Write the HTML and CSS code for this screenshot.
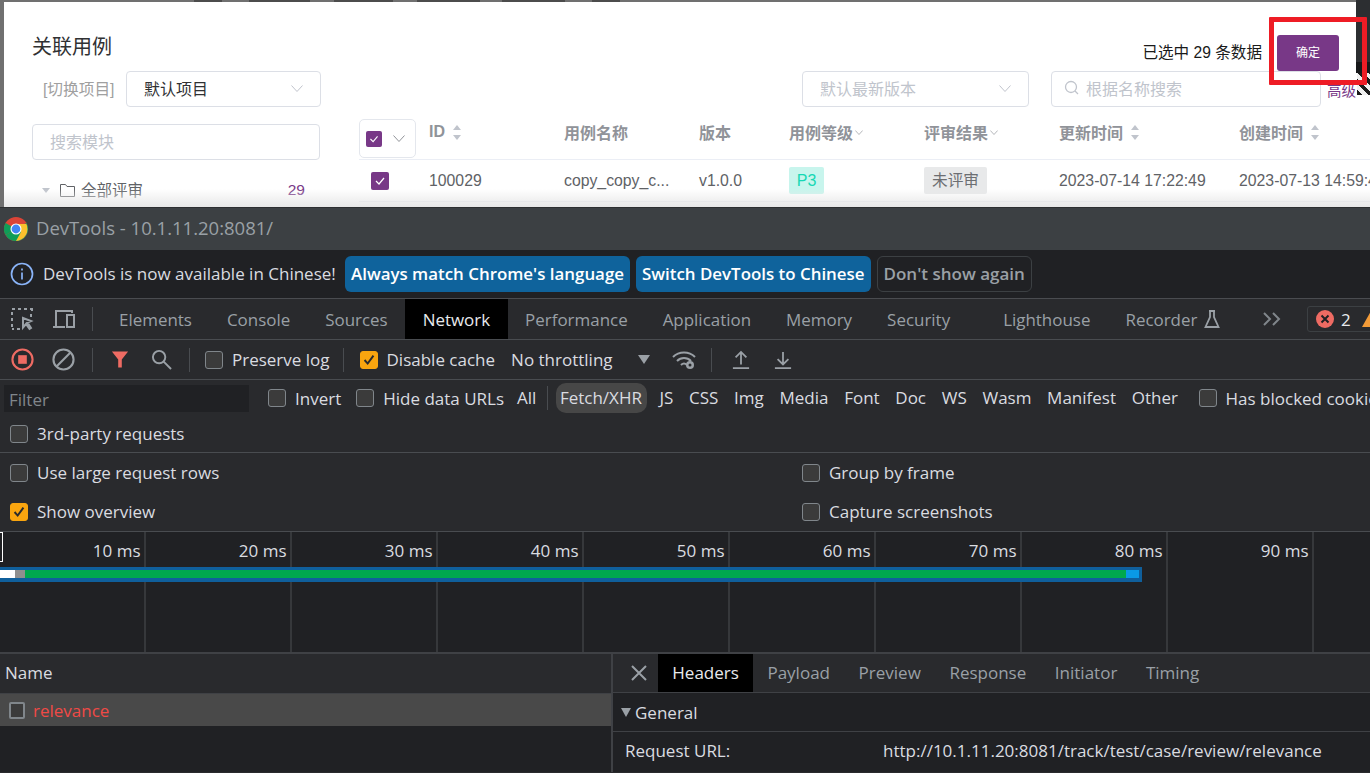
FILE: index.html
```html
<!DOCTYPE html>
<html lang="zh">
<head>
<meta charset="utf-8">
<title>DevTools</title>
<link rel="stylesheet" href="styles.css">
</head>
<body>
<div class="screen">
  <div class="peek"><i class="p1"></i><i class="p2"></i><i class="p3"></i><i class="p4"></i><i class="p5"></i><i class="p6"></i></div>
  <section class="modal">
    <div class="m-head">
      <h2 class="m-title">关联用例</h2>
      <span class="m-count">已选中 29 条数据</span>
      <button class="m-ok"><span>确定</span></button>
    </div>
    <div class="m-filters">
      <span class="m-switch">[切换项目]</span>
      <div class="m-field m-project"><span>默认项目</span><svg class="chev" viewBox="0 0 12 7"><path d="M.5.5 6 6.500 11.500.5"/></svg></div>
      <div class="m-field m-version"><span>默认最新版本</span><svg class="chev" viewBox="0 0 12 7"><path d="M.5.5 6 6.500 11.500.5"/></svg></div>
      <div class="m-field m-search"><svg class="lens" viewBox="0 0 16 16"><circle cx="7" cy="7" r="5.500"/><path d="m11 11 3 3"/></svg><span>根据名称搜索</span></div>
      <a class="m-adv">高级</a>
    </div>
    <div class="m-body">
      <aside class="m-side">
        <div class="m-field m-module"><span>搜索模块</span></div>
        <div class="tree">
          <i class="tree-arrow"></i>
          <svg class="folder" viewBox="0 0 15 13"><path d="M.5 12.500V.5h5l1.500 2h7.500v10z"/></svg>
          <span class="tree-name">全部评审</span>
          <span class="tree-num">29</span>
        </div>
      </aside>
      <div class="m-table">
        <div class="t-head">
          <div class="t-selbox"><i class="t-check"><svg viewBox="0 0 18 18"><path d="m5 9 3 3 5-6"/></svg></i><svg class="chev small" viewBox="0 0 12 7"><path d="M.5.5 6 6.500 11.500.5"/></svg></div>
          <div class="col c-id">ID<i class="sort"></i></div>
          <div class="col c-name">用例名称</div>
          <div class="col c-ver">版本</div>
          <div class="col c-lvl">用例等级<svg class="chev tiny" viewBox="0 0 12 7"><path d="M.5.5 6 6.500 11.500.5"/></svg></div>
          <div class="col c-res">评审结果<svg class="chev tiny" viewBox="0 0 12 7"><path d="M.5.5 6 6.500 11.500.5"/></svg></div>
          <div class="col c-upd">更新时间<i class="sort"></i></div>
          <div class="col c-crt">创建时间<i class="sort"></i></div>
        </div>
        <div class="t-row">
          <div class="c-sel"><i class="t-check"><svg viewBox="0 0 18 18"><path d="m5 9 3 3 5-6"/></svg></i></div>
          <div class="cell c-id">100029</div>
          <div class="cell c-name">copy_copy_c...</div>
          <div class="cell c-ver">v1.0.0</div>
          <div class="cell c-lvl"><span class="tag-p3">P3</span></div>
          <div class="cell c-res"><span class="tag-none">未评审</span></div>
          <div class="cell c-upd">2023-07-14 17:22:49</div>
          <div class="cell c-crt">2023-07-13 14:59:49</div>
        </div>
      </div>
    </div>
    <div class="m-fade"></div>
  </section>
  <div class="snip-strip"></div>
  <div class="snip-hatch"></div>
  <div class="snip-red"></div>

  <section class="devtools">
    <div class="d-title">
      <svg class="chrome" viewBox="0 0 24 24">
        <circle cx="12" cy="12" r="12" fill="#db4437"/>
        <path d="M12 12 1.600 18A12 12 0 0 1 1.600 6z" fill="#0f9d58"/>
        <path d="M1.600 18 12 12l10.400-6A12 12 0 0 1 12 24 12 12 0 0 1 1.600 18z" fill="#0f9d58"/>
        <path d="M12 7h10.400A12 12 0 0 1 12 24l5-9z" fill="#fbc02d"/>
        <circle cx="12" cy="12" r="5.500" fill="#fff"/>
        <circle cx="12" cy="12" r="4.400" fill="#4285f4"/>
      </svg>
      <span>DevTools - 10.1.11.20:8081/</span>
    </div>
    <div class="d-info">
      <svg class="i-info" viewBox="0 0 24 24"><circle cx="12" cy="12" r="10.500"/><path d="M12 10.500v7M12 6.500v2"/></svg>
      <span class="d-info-text">DevTools is now available in Chinese!</span>
      <button class="btn-blue">Always match Chrome's language</button>
      <button class="btn-blue">Switch DevTools to Chinese</button>
      <button class="btn-ghost">Don't show again</button>
    </div>
    <nav class="d-tabs">
      <svg class="ico ico-inspect" viewBox="0 0 24 24"><path d="M2 2h3M8 2h3M14 2h3M20 2h2v2M2 5v3M2 11v3M2 17v3M2 22h2M7 22h3M21 7v3M13 11l8 3-3.500 1.500L21 21l-1.500 1-3.500-5-3 3.500z"/></svg>
      <svg class="ico ico-device" viewBox="0 0 24 24"><path d="M4 17V4h16v2M1 20h12M4 17v3M15 8h7v12h-7z"/></svg>
      <i class="sep sep-tab"></i>
      <a class="tab">Elements</a>
      <a class="tab">Console</a>
      <a class="tab">Sources</a>
      <a class="tab is-on">Network</a>
      <a class="tab">Performance</a>
      <a class="tab">Application</a>
      <a class="tab">Memory</a>
      <a class="tab tab-sec">Security</a>
      <a class="tab">Lighthouse</a>
      <a class="tab tab-rec">Recorder<svg class="flask" viewBox="0 0 16 20"><path d="M5 2h6M6 2v6L1.500 18h13L10 8V2"/></svg></a>
      <svg class="more" viewBox="0 0 18 14"><path d="m1 1 6 6-6 6M10 1l6 6-6 6"/></svg>
      <div class="issues">
        <svg class="err" viewBox="0 0 18 18"><circle cx="9" cy="9" r="9"/><path d="m5.500 5.500 7 7m0-7-7 7"/></svg>
        <span>2</span>
        <svg class="warn" viewBox="0 0 18 16"><path d="M9 0 18 16H0z"/><path class="warn-mark" d="M9 5v6M9 12.500v2"/></svg>
      </div>
    </nav>
    <div class="d-tools">
      <svg class="ico-rec" viewBox="0 0 24 24"><circle cx="12" cy="12" r="10.500"/><rect x="7.500" y="7.500" width="9" height="9"/></svg>
      <svg class="ico-clear" viewBox="0 0 24 24"><circle cx="12" cy="12" r="10.500"/><path d="M5 19 19 5"/></svg>
      <i class="sep ts-1"></i>
      <svg class="ico-filter" viewBox="0 0 20 20"><path d="M1 1h18l-7 9v9H8v-9z"/></svg>
      <svg class="ico-search" viewBox="0 0 22 22"><circle cx="8.500" cy="8.500" r="6.500"/><path d="m13 13 8 8"/></svg>
      <i class="sep ts-2"></i>
      <label class="chk ck-preserve"><i class="box"></i>Preserve log</label>
      <i class="sep ts-3"></i>
      <label class="chk ck-cache"><i class="box on"><svg viewBox="0 0 18 18"><path d="m4 9 3.500 4L14 4"/></svg></i>Disable cache</label>
      <span class="throttle">No throttling</span>
      <i class="caret"></i>
      <svg class="ico-wifi" viewBox="0 0 24 20"><path d="M1 7c6-6 16-6 22 0M5 11c4-4 10-4 14 0M9 15c2-2 4-2 6 0"/><circle cx="18" cy="15" r="4"/><circle class="hole" cx="18" cy="15" r="1.500"/></svg>
      <i class="sep ts-4"></i>
      <svg class="ico-io io-up" viewBox="0 0 20 22"><path d="M10 16V3M4 8l6-6 6 6M1 20h18"/></svg>
      <svg class="ico-io io-down" viewBox="0 0 20 22"><path d="M10 2v13M4 10l6 6 6-6M1 20h18"/></svg>
    </div>
    <div class="d-filter">
      <div class="filter-input">Filter</div>
      <label class="chk"><i class="box"></i>Invert</label>
      <label class="chk"><i class="box"></i>Hide data URLs</label>
      <span class="type type-all">All</span>
      <i class="sep"></i>
      <span class="type is-on">Fetch/XHR</span>
      <span class="type">JS</span>
      <span class="type">CSS</span>
      <span class="type">Img</span>
      <span class="type">Media</span>
      <span class="type">Font</span>
      <span class="type">Doc</span>
      <span class="type">WS</span>
      <span class="type">Wasm</span>
      <span class="type">Manifest</span>
      <span class="type">Other</span>
      <label class="chk chk-blocked"><i class="box"></i>Has blocked cookies</label>
    </div>
    <div class="d-third"><label class="chk"><i class="box"></i>3rd-party requests</label></div>
    <div class="d-settings">
      <label class="chk"><i class="box"></i>Use large request rows</label>
      <label class="chk"><i class="box"></i>Group by frame</label>
      <label class="chk"><i class="box on"><svg viewBox="0 0 18 18"><path d="m4 9 3.500 4L14 4"/></svg></i>Show overview</label>
      <label class="chk"><i class="box"></i>Capture screenshots</label>
    </div>
    <div class="d-over">
      <div class="ov-cell">10 ms</div>
      <div class="ov-cell">20 ms</div>
      <div class="ov-cell">30 ms</div>
      <div class="ov-cell">40 ms</div>
      <div class="ov-cell">50 ms</div>
      <div class="ov-cell">60 ms</div>
      <div class="ov-cell">70 ms</div>
      <div class="ov-cell">80 ms</div>
      <div class="ov-cell">90 ms</div>
      <i class="ov-mark"></i>
      <div class="ov-bar"><i class="b-white"></i><i class="b-gray"></i><i class="b-green"></i><i class="b-blue"></i></div>
    </div>
    <div class="d-split">
      <div class="d-list">
        <div class="l-head">Name</div>
        <div class="l-row"><i class="l-file"></i><span>relevance</span></div>
      </div>
      <div class="d-detail">
        <div class="r-tabs">
          <svg class="close" viewBox="0 0 16 16"><path d="m1 1 14 14M15 1 1 15"/></svg>
          <a class="tab is-on">Headers</a>
          <a class="tab">Payload</a>
          <a class="tab">Preview</a>
          <a class="tab">Response</a>
          <a class="tab">Initiator</a>
          <a class="tab">Timing</a>
        </div>
        <div class="r-general"><i class="r-caret"></i>General</div>
        <div class="r-url"><span class="r-key">Request URL:</span><span>http://10.1.11.20:8081/track/test/case/review/relevance</span></div>
      </div>
    </div>
  </section>
</div>
</body>
</html>
```
FILE: styles.css
```css
* { box-sizing: border-box; }
html, body { margin: 0; padding: 0; }
body { width: 1370px; height: 773px; overflow: hidden; background: #202124; }
i { display: block; font-style: normal; }
button { font: inherit; border: 0; padding: 0; }
.screen { position: relative; width: 1370px; height: 773px; overflow: hidden; background: #707070; }

/* slivers of the page behind the dialog */
.peek { display: flex; height: 2px; }
.peek i { height: 2px; background: #4c4c4c; }
.p1 { width: 28px; margin-left: 194px; }
.p2 { width: 61px; margin-left: 27px; }
.p3 { width: 59px; margin-left: 24px; }
.p4 { width: 63px; margin-left: 24px; }
.p5 { width: 63px; margin-left: 22px; }
.p6 { width: 28px; margin-left: 27px; }

/* modal */
.modal { position: relative; height: 205px; margin-left: 4px; background: #fff; overflow: hidden; font-family: "Liberation Sans", "Noto Sans CJK SC", sans-serif; color: #606266; font-size: 15.800px; }
.m-head { display: flex; align-items: center; height: 69px; padding: 33px 0 0 28px; }
.m-title { margin: 0 auto 0 0; font-weight: 400; font-size: 20px; color: #303133; position: relative; top: -8px; }
.m-count { font-size: 15.600px; color: #1a1a1a; margin-right: 15px; padding-bottom: 4px; }
.m-ok { flex: none; width: 62px; height: 36px; padding-bottom: 3px; background: #783887; color: #fff; font-size: 12px; border-radius: 3px; margin-right: 31px; }
.m-filters { display: flex; align-items: center; height: 36px; padding-left: 39px; }
.m-switch { width: 83px; color: #a0a0a0; font-size: 15.700px; padding-bottom: 2px; flex: none; }
.m-field { display: flex; align-items: center; height: 36px; border: 1px solid #dcdfe6; border-radius: 4px; padding: 0 17px 2px; font-size: 16px; color: #c0c4cc; flex: none; }
.m-project { width: 195px; color: #303133; justify-content: space-between; }
.m-version { width: 227px; margin-left: 481px; justify-content: space-between; }
.m-search { width: 270px; margin-left: 22px; padding-left: 12px; gap: 6px; }
.m-adv { margin-left: 6px; color: #783887; font-size: 14.500px; flex: none; }
.chev { width: 12px; height: 7px; fill: none; stroke: #c0c4cc; stroke-width: 1; flex: none; }
.chev.small { width: 12px; height: 7px; margin-left: 11px; stroke: #909399; }
.chev.tiny { width: 8px; height: 5px; margin-left: 2px; stroke: #909399; }
.lens { width: 16px; height: 16px; fill: none; stroke: #c0c4cc; stroke-width: 1.300; flex: none; }
.m-body { display: flex; padding-left: 28px; }
.m-side { width: 288px; padding-top: 17px; flex: none; }
.m-module { width: 288px; }
.tree { display: flex; align-items: center; height: 18px; margin-top: 21px; padding-left: 10px; font-size: 15.500px; color: #606266; }
.tree-arrow { width: 0; height: 0; border: 4px solid transparent; border-top: 5px solid #c0c4cc; border-bottom: 0; margin-right: 10px; }
.folder { width: 15px; height: 13px; fill: none; stroke: #606266; margin-right: 6px; }
.tree-name { flex: 1; padding-bottom: 2px; }
.tree-num { color: #783887; margin-right: 15px; }
.m-table { width: 1011px; margin-left: 39px; padding-top: 12px; flex: none; }
.t-head { display: flex; height: 41px; border-bottom: 1px solid #ebeef5; font-weight: 700; color: #909399; font-size: 16px; }
.t-selbox { display: flex; align-items: center; flex: none; width: 57px; height: 39px; border: 1px solid #e4e7ed; border-radius: 5px; padding: 0 0 0 6px; background: #fff; }
.t-check { display: block; flex: none; width: 16px; height: 16px; background: #783887; border-radius: 2px; }
.t-check svg { display: block; width: 100%; height: 100%; fill: none; stroke: #fff; stroke-width: 1.200; }
.col { display: flex; align-items: center; height: 26px; flex: none; }
.cell { display: flex; align-items: center; flex: none; }
.c-sel { display: flex; align-items: center; flex: none; width: 70px; padding-left: 12px; }
.c-sel .t-check { width: 18px; height: 18px; }
.c-id { width: 135px; margin-left: 13px; }
.t-row .c-id { margin-left: 0; }
.c-name { width: 135px; }
.c-ver { width: 90px; }
.c-lvl { width: 135px; }
.c-res { width: 135px; }
.c-upd { width: 180px; }
.c-crt { width: 200px; white-space: nowrap; }
.t-row { display: flex; height: 42px; border-bottom: 1px solid #e4e7ed; color: #606266; }
.sort { width: 9px; height: 15px; margin-left: 8px; position: relative; }
.sort::before, .sort::after { content: ""; position: absolute; left: 0; border: 4.500px solid transparent; }
.sort::before { top: 0; border-bottom: 5px solid #c0c4cc; border-top: 0; }
.sort::after { bottom: 0; border-top: 5px solid #c0c4cc; border-bottom: 0; }
.tag-p3 { display: flex; align-items: center; justify-content: center; width: 35px; height: 27px; background: #c8f5ed; color: #16d8b4; font-size: 16px; border-radius: 2px; }
.tag-none { display: flex; align-items: center; justify-content: center; width: 63px; height: 27px; padding-bottom: 2px; background: #e8e9ea; color: #6c6e72; font-size: 15.700px; border-radius: 2px; }
.m-fade { position: absolute; left: 0; right: 0; bottom: 0; height: 18px; background: linear-gradient(rgba(240,240,240,0), #e8e8e8); }

/* snip overlays */
.snip-strip { position: absolute; left: 1356px; top: 0; width: 14px; height: 73px; background: linear-gradient(#2c2e31 0 62px, #17181a 62px); }
.snip-hatch { position: absolute; left: 1357px; top: 73px; width: 13px; height: 22px; background: repeating-linear-gradient(45deg, #1c1c1c 0 4px, #f0f0f0 4px 8px); }
.snip-red { position: absolute; left: 1269px; top: 17px; width: 98px; height: 68px; border: 5px solid #ee1c25; border-radius: 1px; }

/* devtools */
.devtools { position: absolute; left: 0; top: 207px; width: 1370px; height: 566px; background: #292a2d; font-family: "Open Sans", "Noto Sans", sans-serif; font-size: 17px; color: #dadce0; }
.d-title { display: flex; align-items: center; height: 43px; background: #3c4043; border-top: 1px solid #2d2f31; padding: 0 0 0 4px; gap: 8px; color: #9aa0a6; font-size: 18.500px; }
.d-title span { padding-bottom: 4px; }
.chrome { width: 24px; height: 24px; }
.d-info { display: flex; align-items: center; height: 49px; background: #202124; border-bottom: 1px solid #4a4c50; padding-left: 10px; }
.i-info { width: 24px; height: 24px; fill: none; stroke: #8ab4f8; stroke-width: 1.700; margin-right: 9px; flex: none; }
.d-info-text { width: 302px; flex: none; white-space: nowrap; padding-bottom: 2px; }
.btn-blue { height: 36px; padding: 0 6px 2px; background: #0f639c; color: #fff; border-radius: 6px; font-weight: 600; margin-right: 6px; font-size: 16.900px; flex: none; }
.btn-ghost { height: 36px; padding: 0 6px 2px; background: transparent; color: #9aa0a6; border: 1px solid #3c4043; border-radius: 6px; font-weight: 600; font-size: 17px; flex: none; }
.d-tabs { display: flex; align-items: stretch; height: 41px; border-bottom: 1px solid #494c50; padding-left: 10px; color: #9aa0a6; overflow: hidden; font-size: 16.950px; }
.ico { align-self: center; fill: none; stroke: #9aa0a6; stroke-width: 2; width: 24px; height: 24px; flex: none; }
.ico-device { margin-left: 18px; }
.sep { width: 1px; height: 24px; background: #494c50; align-self: center; flex: none; }
.sep-tab { margin: 0 8.500px 0 16px; }
.tab { display: flex; align-items: center; flex: none; padding: 0 17.500px; color: #9aa0a6; white-space: nowrap; }
.tab.is-on { background: #000; color: #e8eaed; }
.tab-sec { margin-right: 18px; }
.flask { width: 16px; height: 20px; fill: none; stroke: #9aa0a6; stroke-width: 1.800; margin-left: 7px; }
.more { align-self: center; width: 18px; height: 14px; fill: none; stroke: #80868b; stroke-width: 2; margin-left: 25px; flex: none; }
.issues { display: flex; align-items: center; align-self: center; gap: 7px; height: 26px; width: 80px; margin-left: 26px; padding-left: 8px; border: 1px solid #3c4043; border-radius: 3px; color: #e8eaed; flex: none; }
.err { width: 18px; height: 18px; flex: none; fill: #ee6b63; }
.err path { fill: none; stroke: #202124; stroke-width: 2; }
.warn { width: 18px; height: 16px; flex: none; fill: #f29b38; margin-left: 4px; }
.warn .warn-mark { fill: none; stroke: #202124; stroke-width: 2; }
.d-tools { display: flex; align-items: center; height: 40px; padding-left: 11px; border-bottom: 1px solid #494c50; }
.ico-rec { width: 23px; height: 23px; flex: none; fill: none; stroke: #ee6b63; stroke-width: 2.200; }
.ico-rec rect { fill: #ee6b63; stroke: none; }
.ico-clear { width: 23px; height: 23px; flex: none; fill: none; stroke: #9aa0a6; stroke-width: 2.200; margin-left: 18px; }
.ts-1 { margin-left: 17px; }
.ts-2 { margin-left: 17px; }
.ts-3 { margin-left: 13px; }
.ts-4 { margin-left: 15px; }
.ico-filter { width: 18px; height: 19px; flex: none; fill: #ee6b63; margin-left: 18px; }
.ico-search { width: 21px; height: 21px; flex: none; fill: none; stroke: #9aa0a6; stroke-width: 2; margin-left: 22px; }
.chk { display: flex; align-items: center; gap: 9px; white-space: nowrap; color: #dadce0; flex: none; }
.ck-preserve { margin-left: 15px; }
.ck-cache { margin-left: 16px; }
.box { display: block; width: 18px; height: 18px; flex: none; background: #3b3b3b; border: 1.500px solid #80868b; border-radius: 3px; }
.box.on { background: #f9a50f; border-color: #f9a50f; }
.box svg { display: block; width: 100%; height: 100%; fill: none; stroke: #292a2d; stroke-width: 2.200; }
.throttle { margin-left: 16px; flex: none; }
.caret { width: 0; height: 0; flex: none; border: 6px solid transparent; border-top: 9px solid #9aa0a6; border-bottom: 0; margin-left: 25px; }
.ico-wifi { width: 24px; height: 20px; flex: none; fill: none; stroke: #9aa0a6; stroke-width: 2; margin-left: 22px; }
.ico-wifi circle { fill: #9aa0a6; stroke: none; }
.ico-wifi .hole { fill: #292a2d; }
.ico-io { width: 18px; height: 20px; flex: none; fill: none; stroke: #9aa0a6; stroke-width: 2; }
.io-up { margin-left: 20px; }
.io-down { margin-left: 24px; }
.d-filter { display: flex; align-items: center; height: 39px; padding: 0 0 3px 4px; white-space: nowrap; overflow: hidden; }
.filter-input { width: 245px; height: 27px; margin-right: 19px; padding-left: 5px; background: #202124; color: #80868b; line-height: 30px; flex: none; }
.d-filter .chk + .chk { margin-left: 15px; }
.d-filter .sep { margin: 0 8px 0 0; }
.type { margin-right: 15.700px; line-height: 30px; flex: none; }
.type-all { margin-left: 13px; margin-right: 11px; }
.type.is-on { background: #474747; padding: 0 5.500px 0 3.500px; border-radius: 10px; margin-right: 12px; }
.chk-blocked { margin-left: 5px; }
.d-third { display: flex; align-items: center; height: 34px; padding: 0 0 4px 10px; border-bottom: 1px solid #494c50; }
.d-settings { display: grid; grid-template-columns: 792px 1fr; grid-auto-rows: 39px; align-items: center; padding-left: 10px; height: 79px; border-bottom: 1px solid #494c50; }
.d-over { position: relative; display: flex; height: 122px; background: #202124; border-bottom: 2px solid #3f4145; }
.ov-cell { flex: none; width: 146px; border-right: 2px solid #36383b; padding: 7px 3px 0 0; text-align: right; color: #dadce0; }
.ov-cell:first-child { width: 145.500px; }
.ov-mark { position: absolute; left: 0; top: 0; width: 3px; height: 30px; border: 1px solid #fff; border-left: 0; }
.ov-bar { position: absolute; left: 0; top: 35px; display: flex; width: 1142px; height: 15px; border: solid #0f5f9c; border-width: 3px 3px 4px 0; }
.b-white { width: 15px; background: #fff; }
.b-gray { width: 10px; background: #8f8f8f; }
.b-green { width: 1101px; background: #00a84f; }
.b-blue { flex: 1; background: #0a9ae6; }
.d-split { display: flex; height: 118px; background: #202124; }
.d-list { width: 611px; flex: none; }
.l-head { display: flex; align-items: center; height: 40px; padding: 0 0 2px 5px; background: #292a2d; border-bottom: 1px solid #3f4145; color: #dadce0; }
.l-row { display: flex; align-items: center; height: 32px; padding-left: 9px; gap: 8px; background: #494949; color: #f04a46; }
.l-file { width: 16px; height: 17px; background: #3b3b3b; border: 2px solid #80868b; border-radius: 2px; }
.d-detail { flex: 1; border-left: 2px solid #3f4145; }
.r-tabs { display: flex; align-items: stretch; height: 39px; background: #292a2d; border-bottom: 1px solid #3f4145; padding-left: 18px; }
.r-tabs .tab { padding: 0 14.300px 2px; }
.close { width: 16px; height: 16px; align-self: center; fill: none; stroke: #9aa0a6; stroke-width: 2; margin-right: 11px; flex: none; }
.r-general { display: flex; align-items: center; height: 39px; padding-left: 8px; gap: 4px; border-bottom: 1px solid #3f4145; }
.r-caret { width: 0; height: 0; border: 5px solid transparent; border-top: 9px solid #9aa0a6; border-bottom: 0; }
.r-url { display: flex; align-items: center; height: 39px; padding: 0 0 3px 12px; }
.r-key { width: 258px; flex: none; }
```
